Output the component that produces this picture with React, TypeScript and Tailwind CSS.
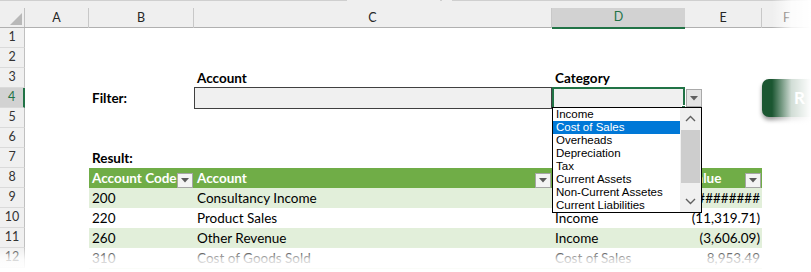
import React from "react";

const grid = "grid grid-cols-[64px_105px_358px_133px_77px_1fr]";
const tableGrid = "grid grid-cols-[105px_358px_133px_77px]";

const Row = ({ n, active, children }: { n: number; active?: boolean; children?: React.ReactNode }) => (
  <div className="flex h-[20px]">
    <div
      className={`w-[25px] shrink-0 flex items-center justify-center text-[12.5px] border-b border-b-[#dadada] ${
        active
          ? "bg-[#d2d2d2] text-[#217346] border-r-2 border-r-[#217346]"
          : "bg-[#f0f0f0] text-[#333] border-r border-r-[#c0c0c0]"
      }`}
    >
      {n}
    </div>
    <div className={`${grid} flex-1`}>{children}</div>
  </div>
);

const FilterBtn = () => (
  <div className="w-[16px] h-[15px] shrink-0 mb-[1px] bg-[#f4f4f4] border border-[#a6a6a6] flex items-center justify-center">
    <svg width="8" height="5" viewBox="0 0 8 5">
      <path d="M0 0h8L4 4.5z" fill="#5a5a5a" />
    </svg>
  </div>
);

const Chevron = ({ up }: { up?: boolean }) => (
  <svg width="11" height="7" viewBox="0 0 11 7">
    <path d={up ? "M1 6l4.5-4.5L10 6" : "M1 1l4.5 4.5L10 1"} fill="none" stroke="#606060" strokeWidth="1.4" />
  </svg>
);

const rows = [
  { code: "200", account: "Consultancy Income", cat: "Income", value: "##########", band: true },
  { code: "220", account: "Product Sales", cat: "Income", value: "(11,319.71)", band: false },
  { code: "260", account: "Other Revenue", cat: "Income", value: "(3,606.09)", band: true },
  { code: "310", account: "Cost of Goods Sold", cat: "Cost of Sales", value: "8,953.49", band: false },
];

const categories = [
  "Income",
  "Cost of Sales",
  "Overheads",
  "Depreciation",
  "Tax",
  "Current Assets",
  "Non-Current Assetes",
  "Current Liabilities",
];

export default function App() {
  return (
    <div className="relative w-[811px] h-[272px] overflow-hidden bg-white font-['Lato',sans-serif] text-[13.5px] text-black">
      {/* ribbon edge */}
      <div className="h-[8px] bg-[#efefef] flex items-start">
        <div className="w-[347px] h-[1px] bg-[#cfcfcf]" />
        <div className="w-[93px]" />
        <div className="w-[2px] h-[1px] bg-[#cfcfcf]" />
        <div className="w-[10px]" />
        <div className="flex-1 h-[1px] bg-[#cfcfcf]" />
      </div>

      {/* column headers */}
      <div className="flex h-[20px] bg-[#efefef] border-b border-[#b0b0b0] text-[12.5px] text-[#262626]">
        <div className="w-[25px] shrink-0 border-r border-[#c0c0c0] flex items-end justify-end p-[2px]">
          <svg width="12" height="12" viewBox="0 0 12 12">
            <path d="M12 0v12H0z" fill="#b8b8b8" />
          </svg>
        </div>
        <div className={`${grid} flex-1`}>
          <div className="flex items-center justify-center border-r border-[#c8c8c8]">A</div>
          <div className="flex items-center justify-center border-r border-[#c8c8c8]">B</div>
          <div className="flex items-center justify-center border-r border-[#c8c8c8]">C</div>
          <div className="flex items-center justify-center bg-[#d2d2d2] text-[#217346] border-b-2 border-[#217346] -mb-[1px]">D</div>
          <div className="flex items-center justify-center border-r border-[#c8c8c8]">E</div>
          <div className="flex items-center justify-center">F</div>
        </div>
      </div>

      <Row n={1} />
      <Row n={2} />
      <Row n={3}>
        <div className="col-start-3 flex items-end pl-[3px] pb-[1px] font-bold">Account</div>
        <div className="flex items-end pl-[3px] pb-[1px] font-bold">Category</div>
      </Row>
      <Row n={4} active>
        <div className="col-start-2 flex items-end pl-[3px] pb-[1px] font-bold">Filter:</div>
        <div className="bg-[#f0f0f0] border border-[#404040] -mt-[1px]" />
        <div className="relative bg-[#f0f0f0] border-2 border-[#217346] -mt-[1px]">
          <div className="absolute -right-[3px] -bottom-[3px] w-[5px] h-[5px] bg-[#217346] border border-white" />
        </div>
      </Row>
      <Row n={5} />
      <Row n={6} />
      <Row n={7}>
        <div className="col-start-2 flex items-end pl-[3px] pb-[1px] font-bold">Result:</div>
      </Row>
      <Row n={8}>
        <div className={`col-start-2 col-span-4 ${tableGrid} bg-[#70ad47] text-white font-bold`}>
          <div className="flex items-end justify-between pl-[3px] pr-[1px] overflow-hidden">
            <span className="pb-[1px] whitespace-nowrap">Account Code</span>
            <FilterBtn />
          </div>
          <div className="flex items-end justify-between pl-[3px] pr-[1px]">
            <span className="pb-[1px]">Account</span>
            <FilterBtn />
          </div>
          <div className="flex items-end justify-between pl-[3px] pr-[1px]">
            <span className="pb-[1px]">Category</span>
            <FilterBtn />
          </div>
          <div className="flex items-end justify-between pl-[3px] pr-[1px]">
            <span className="pb-[1px]">Value</span>
            <FilterBtn />
          </div>
        </div>
      </Row>
      {rows.map((r, i) => (
        <Row key={r.code} n={9 + i}>
          <div
            className={`col-start-2 col-span-4 ${tableGrid} border-b border-[#a9d08e] ${
              r.band ? "bg-[#e2efda]" : "bg-white"
            }`}
          >
            <div className="flex items-end pl-[3px]">{r.code}</div>
            <div className="flex items-end pl-[3px]">{r.account}</div>
            <div className="flex items-end pl-[3px]">{r.cat}</div>
            <div className="flex items-end justify-end pr-[2px] whitespace-nowrap overflow-hidden">{r.value}</div>
          </div>
        </Row>
      ))}

      {/* dropdown arrow of the validation list */}
      <div className="absolute left-[686px] top-[89px] w-[16px] h-[18px] bg-[#e4e4e4] border border-[#a9a9a9] flex items-center justify-center">
        <svg width="8" height="5" viewBox="0 0 8 5">
          <path d="M0 0h8L4 4.5z" fill="#606060" />
        </svg>
      </div>

      {/* validation list */}
      <div className="absolute left-[552px] top-[107px] w-[150px] h-[106px] bg-white border border-black flex font-['Liberation_Sans',sans-serif] text-[11.5px]">
        <div className="flex-1 flex flex-col pt-[0px]">
          {categories.map((c, i) => (
            <div
              key={c}
              className={`h-[13px] leading-[13px] pl-[3px] whitespace-nowrap ${
                i === 1 ? "bg-[#0078d7] text-white" : "text-black"
              }`}
            >
              {c}
            </div>
          ))}
        </div>
        <div className="w-[21px] bg-[#f0f0f0] flex flex-col items-center">
          <div className="h-[21px] flex items-center justify-center">
            <Chevron up />
          </div>
          <div className="mt-[1px] w-[19px] h-[53px] bg-[#cdcdcd]" />
          <div className="flex-1" />
          <div className="h-[21px] flex items-center justify-center">
            <Chevron />
          </div>
        </div>
      </div>

      {/* macro button */}
      <div className="absolute left-[762px] top-[79px] w-[80px] h-[38px] rounded-[7px] bg-[#1b5631] shadow-[0_3px_4px_rgba(0,0,0,0.4)] flex items-center pl-[32px] text-white font-bold text-[17px]">
        R
      </div>

      {/* fades */}
      <div className="absolute left-[772px] top-0 w-[39px] h-full bg-linear-to-r from-white/0 via-white/80 to-white" />
      <div className="absolute left-0 top-[247px] w-full h-[25px] bg-linear-to-b from-white/0 via-white/80 to-white" />
    </div>
  );
}
